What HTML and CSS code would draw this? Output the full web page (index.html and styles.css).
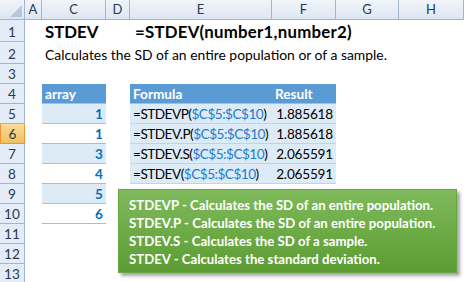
FILE: index.html
```html
<!DOCTYPE html>
<html lang="en">
<head>
  <meta charset="UTF-8">
  <title>STDEV</title>
  <link rel="stylesheet" href="styles.css">
</head>
<body>
  <div class="sheet-wrap">
    <table class="sheet">
      <colgroup>
        <col class="w-hd"><col class="w-a"><col class="w-c"><col class="w-d">
        <col class="w-e"><col class="w-f"><col class="w-g"><col class="w-h">
      </colgroup>
      <thead>
        <tr class="hdr">
          <th class="corner">
            <svg width="12" height="12" viewBox="0 0 12 12"><polygon points="12,0 12,12 0,12" fill="#b6c7dc"/></svg>
          </th>
          <th>A</th><th>C</th><th>D</th><th>E</th><th>F</th><th>G</th><th>H</th>
        </tr>
      </thead>
      <tbody>
        <tr class="tall">
          <th>1</th><td></td>
          <td class="title" colspan="2">STDEV</td>
          <td class="title fn" colspan="4">=STDEV(number1,number2)</td>
        </tr>
        <tr class="tall">
          <th>2</th><td></td>
          <td class="desc" colspan="6">Calculates the SD of an entire population or of a sample.</td>
        </tr>
        <tr><th>3</th><td></td><td></td><td></td><td></td><td></td><td></td><td></td></tr>
        <tr>
          <th>4</th><td></td>
          <td class="tb-head">array</td><td></td>
          <td class="tb-head">Formula</td><td class="tb-head">Result</td>
          <td></td><td></td>
        </tr>
        <tr>
          <th>5</th><td></td>
          <td class="num band">1</td><td></td>
          <td class="band formula">=STDEVP(<span class="ref">$C$5:$C$10</span>)</td><td class="band res">1.885618</td>
          <td></td><td></td>
        </tr>
        <tr>
          <th class="sel">6</th><td></td>
          <td class="num">1</td><td></td>
          <td class="band formula">=STDEV.P(<span class="ref">$C$5:$C$10</span>)</td><td class="band res">1.885618</td>
          <td></td><td></td>
        </tr>
        <tr>
          <th>7</th><td></td>
          <td class="num band">3</td><td></td>
          <td class="band formula">=STDEV.S(<span class="ref">$C$5:$C$10</span>)</td><td class="band res">2.065591</td>
          <td></td><td></td>
        </tr>
        <tr>
          <th>8</th><td></td>
          <td class="num">4</td><td></td>
          <td class="band formula">=STDEV(<span class="ref">$C$5:$C$10</span>)</td><td class="band res">2.065591</td>
          <td></td><td></td>
        </tr>
        <tr><th>9</th><td></td><td class="num band">5</td><td></td><td></td><td></td><td></td><td></td></tr>
        <tr><th>10</th><td></td><td class="num">6</td><td></td><td></td><td></td><td></td><td></td></tr>
        <tr><th>11</th><td></td><td></td><td></td><td></td><td></td><td></td><td></td></tr>
        <tr><th>12</th><td></td><td></td><td></td><td></td><td></td><td></td><td></td></tr>
        <tr><th>13</th><td></td><td></td><td></td><td></td><td></td><td></td><td></td></tr>
      </tbody>
    </table>

    <!-- callout shape over the sheet -->
    <div class="callout">
      <div>STDEVP - Calculates the SD of an entire population.</div>
      <div>STDEV.P - Calculates the SD of an entire population.</div>
      <div>STDEV.S - Calculates the SD of a sample.</div>
      <div>STDEV - Calculates the standard deviation.</div>
    </div>
  </div>
</body>
</html>
```

FILE: styles.css
```css
/* ====== Base ====== */
body{margin:0;background:#fff;font-family:Lato,'Liberation Sans',sans-serif;color:#000;overflow:hidden}
.sheet-wrap{position:relative;width:464px;height:282px;overflow:hidden}

/* ====== Sheet grid ====== */
.sheet{border-collapse:separate;border-spacing:0;table-layout:fixed;width:464px;font-size:13.6px}
.w-hd{width:25px}.w-a{width:17px}.w-c{width:64px}.w-d{width:24px}
.w-e{width:142px}.w-f{width:64px}.w-g{width:63px}.w-h{width:65px}
.sheet td,.sheet th{padding:0 3px;white-space:nowrap;overflow:visible;vertical-align:bottom;line-height:18px;text-align:left;font-weight:normal}
.sheet tr{height:20px}
.sheet tr.tall{height:22px}

/* column + row headers */
.hdr{height:21px}
.hdr th{background:linear-gradient(#f1f5fb,#dde6f2);border-right:1px solid #9eb6ce;border-bottom:1px solid #9eb6ce;text-align:center;color:#2b3a4c;font-size:13px;vertical-align:middle;line-height:19px}
.hdr th.corner{padding:0;vertical-align:bottom;text-align:right;line-height:0}
.hdr th.corner svg{margin:0 2px 2px 0}
tbody th{background:#e4ecf7;border-right:1px solid #9eb6ce;border-bottom:1px solid #9eb6ce;text-align:center!important;color:#2b3a4c;font-size:13.6px}
tbody th.sel{background:linear-gradient(#f9dc9f,#f1c15f);border:1px solid #f29436;border-top:none}

/* titles */
.title{font-size:16.8px;font-weight:bold!important;line-height:20px!important}
.title.fn{padding-left:5px;letter-spacing:.25px}
.desc{font-size:13.9px}

/* ====== Tables ====== */
.tb-head{background:#5b9bd5;color:#fff;font-weight:bold!important;border-bottom:1px solid #9bc2e6}
.band{background:#ddebf7}
.num{color:#0070c0;font-weight:bold!important;text-align:right!important;border-bottom:1px solid #9bc2e6}
td.band:not(.num){border-bottom:1px solid #b9d4ee}
.formula{letter-spacing:-.5px}
.ref{color:#1a7bd0}
.res{text-align:right!important;letter-spacing:-.2px}

/* ====== Callout ====== */
.callout{position:absolute;left:118px;top:189px;width:339px;box-sizing:border-box;padding:6px 10px 4px;background:linear-gradient(#7fba5c,#5c9c33);border:1px solid #6aa544;box-shadow:3px 3px 3px rgba(0,0,0,.35);color:#fff;font-size:13.2px;font-weight:bold;line-height:18px}
```
